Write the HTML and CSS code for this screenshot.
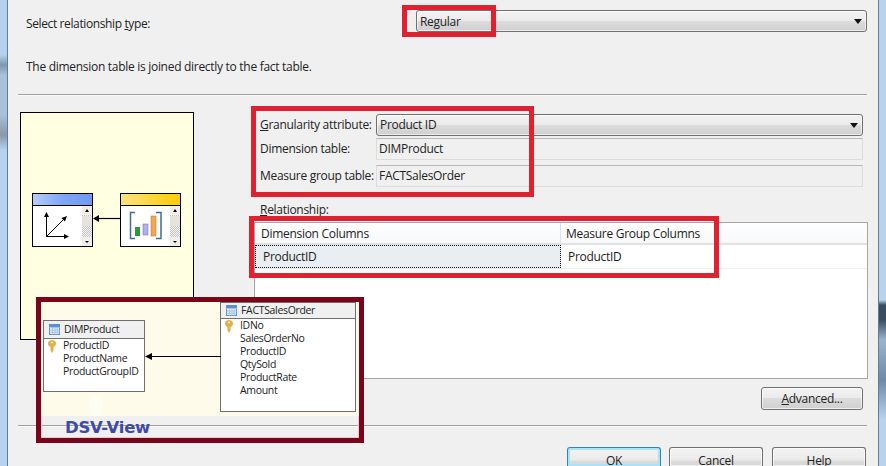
FILE: index.html
```html
<!DOCTYPE html>
<html lang="en">
<head>
<meta charset="utf-8">
<title>Define Relationship</title>
<link rel="stylesheet" href="styles.css">
</head>
<body>
<div class="screen">
  <div class="edge edge-left"></div>
  <main class="dialog">
    <div class="type-row">
      <span class="text type-label">Select relationship <u>t</u>ype:</span>
      <div class="combo combo-type"><span>Regular</span><i class="caret"></i></div>
    </div>
    <p class="desc">The dimension table is joined directly to the fact table.</p>
    <div class="rule"></div>
    <div class="main">
      <div class="preview">
        <div class="mini">
          <svg class="mini-win" width="61" height="54" viewBox="0 0 61 54">
            <defs>
              <linearGradient id="blue" x1="0" x2="1" y1="0" y2="0"><stop offset="0" stop-color="#b4cdfb"/><stop offset="0.5" stop-color="#7fa6f5"/><stop offset="1" stop-color="#6f9af2"/></linearGradient>
              <pattern id="dith" width="2" height="2" patternUnits="userSpaceOnUse"><rect width="2" height="2" fill="#f4f4f4"/><rect width="1" height="1" fill="#c4c4c4"/><rect x="1" y="1" width="1" height="1" fill="#c4c4c4"/></pattern>
            </defs>
            <rect x="0.5" y="0.5" width="60" height="53" fill="#fff" stroke="#000"/>
            <rect x="1" y="1" width="59" height="11" fill="url(#blue)"/>
            <path d="M0 12.500H61" stroke="#000"/>
            <rect x="50" y="13" width="10" height="40" fill="url(#dith)"/>
            <rect x="50" y="13" width="10" height="9" fill="#efefe8"/><rect x="50" y="23" width="10" height="10" fill="#e6e4da"/><rect x="50" y="44" width="10" height="9" fill="#efefe8"/>
            <path d="M55 16l2 3h-4z M53 48h4l-2 2z" fill="#000"/>
            <path d="M14.500 43.500V21 M14.500 43.500H36 M14.500 43.500L33 25" stroke="#000" fill="none"/>
            <path d="M14.500 19l-2.500 5h5z M37 43.500l-5-2.500v5z M35 23l-5.500 2 3.500 3.500z" fill="#000"/>
          </svg>
          <svg class="mini-arrow" width="27" height="54" viewBox="0 0 27 54">
            <path d="M5 25.500H27" stroke="#000" stroke-width="1.200"/><path d="M0 25.500l6-3.500v7z" fill="#000"/>
          </svg>
          <svg class="mini-win" width="61" height="54" viewBox="0 0 61 54">
            <defs>
              <linearGradient id="gold" x1="0" x2="1" y1="0" y2="0"><stop offset="0" stop-color="#fde37a"/><stop offset="1" stop-color="#fdcb05"/></linearGradient>
              <pattern id="dith2" width="2" height="2" patternUnits="userSpaceOnUse"><rect width="2" height="2" fill="#f4f4f4"/><rect width="1" height="1" fill="#c4c4c4"/><rect x="1" y="1" width="1" height="1" fill="#c4c4c4"/></pattern>
            </defs>
            <rect x="0.5" y="0.5" width="60" height="53" fill="#fff" stroke="#000"/>
            <rect x="1" y="1" width="59" height="11" fill="url(#gold)"/>
            <path d="M0 12.500H61" stroke="#000"/>
            <rect x="50" y="13" width="10" height="40" fill="url(#dith2)"/>
            <rect x="50" y="13" width="10" height="9" fill="#efefe8"/><rect x="50" y="23" width="10" height="10" fill="#e6e4da"/><rect x="50" y="44" width="10" height="9" fill="#efefe8"/>
            <path d="M55 16l2 3h-4z M53 48h4l-2 2z" fill="#000"/>
            <path d="M15 19.500h-4.500v26h4.500 M36 19.500h5v26h-5" fill="none" stroke="#3d6f9a" stroke-width="1.500"/>
            <rect x="15" y="34" width="5" height="9" fill="#2c9a3a"/>
            <rect x="23" y="31" width="5" height="11" fill="#b2aef0" stroke="#6a68b0" stroke-width=".5"/>
            <rect x="31" y="23" width="5" height="20" fill="#f2a94e" stroke="#b0752c" stroke-width=".5"/>
          </svg>
        </div>
      </div>
      <div class="side">
        <div class="form-row form-first">
          <label class="text form-label"><u>G</u>ranularity attribute:</label>
          <div class="combo combo-form"><span>Product ID</span><i class="caret"></i></div>
        </div>
        <div class="form-row form-second">
          <label class="text form-label">Dimension table:</label>
          <div class="readonly">DIMProduct</div>
        </div>
        <div class="form-row form-third">
          <label class="text form-label">Measure group table:</label>
          <div class="readonly">FACTSalesOrder</div>
        </div>
        <div class="text rel-label"><u>R</u>elationship:</div>
        <div class="grid">
          <div class="grid-head">
            <div class="head-cell head-a">Dimension Columns</div>
            <div class="head-cell head-b">Measure Group Columns</div>
          </div>
          <div class="grid-row">
            <div class="cell cell-a">ProductID</div>
            <div class="cell cell-b">ProductID</div>
          </div>
        </div>
        <div class="adv-row"><button class="btn btn-adv" type="button"><u>A</u>dvanced...</button></div>
      </div>
    </div>
    <div class="rule rule-bottom"></div>
    <div class="footer">
      <button class="btn btn-foot btn-ok" type="button">OK</button>
      <button class="btn btn-foot" type="button">Cancel</button>
      <button class="btn btn-foot btn-help" type="button">Help</button>
    </div>
  </main>
  <div class="edge edge-right"></div>

  <div class="mark mark-type"></div>
  <div class="mark mark-form"></div>
  <div class="mark mark-grid"></div>

  <div class="dsv">
    <div class="dsv-canvas"></div>
    <div class="dsv-smudge"></div>
    <div class="table table-dim">
      <div class="table-head">
        <svg class="tbl-icon" width="11" height="11" viewBox="0 0 11 11"><rect x=".5" y=".5" width="10" height="10" fill="#e4eefa" stroke="#5b8fd0"/><path d="M0 3.500H11M.5 6H11M.5 8.300H11M3.500 3V11M6 3V11M8.300 3V11" stroke="#9dbde6" stroke-width=".8"/><rect x="1" y="1" width="9" height="2" fill="#5b8fd0"/></svg>
        <span>DIMProduct</span>
      </div>
      <div class="table-body">
        <svg class="key" width="8" height="13" viewBox="0 0 8 13"><path d="M4 0C6.200 0 8 1.500 8 3.500S6.800 6.500 5.500 7V10.500L4 13L2.500 10.500V7C1.200 6.500 0 5.500 0 3.500S1.800 0 4 0Z" fill="#e2b04a"/><circle cx="4" cy="2.500" r="1.100" fill="#fbeec4"/></svg>
        <div>ProductID</div><div>ProductName</div><div>ProductGroupID</div>
      </div>
    </div>
    <div class="table table-fact">
      <div class="table-head">
        <svg class="tbl-icon" width="11" height="11" viewBox="0 0 11 11"><rect x=".5" y=".5" width="10" height="10" fill="#e4eefa" stroke="#5b8fd0"/><path d="M0 3.500H11M.5 6H11M.5 8.300H11M3.500 3V11M6 3V11M8.300 3V11" stroke="#9dbde6" stroke-width=".8"/><rect x="1" y="1" width="9" height="2" fill="#5b8fd0"/></svg>
        <span>FACTSalesOrder</span>
      </div>
      <div class="table-body">
        <svg class="key" width="8" height="13" viewBox="0 0 8 13"><path d="M4 0C6.200 0 8 1.500 8 3.500S6.800 6.500 5.500 7V10.500L4 13L2.500 10.500V7C1.200 6.500 0 5.500 0 3.500S1.800 0 4 0Z" fill="#e2b04a"/><circle cx="4" cy="2.500" r="1.100" fill="#fbeec4"/></svg>
        <div>IDNo</div><div>SalesOrderNo</div><div>ProductID</div><div>QtySold</div><div>ProductRate</div><div>Amount</div>
      </div>
    </div>
    <svg class="rel-arrow" width="76" height="9" viewBox="0 0 76 9"><path d="M5 4.500H76" stroke="#000" stroke-width="1.200"/><path d="M0 4.500l7-3.500v7z" fill="#000"/></svg>
    <div class="dsv-label">DSV-View</div>
  </div>
</div>
</body>
</html>
```

FILE: styles.css
```css
* { box-sizing: border-box; }
html, body { margin: 0; padding: 0; }
body { width: 886px; height: 466px; overflow: hidden; background: #f0f0f0; }
u { text-decoration: underline; text-underline-offset: 1px; }

.screen {
  position: relative;
  display: flex;
  width: 886px;
  height: 466px;
  overflow: hidden;
  font: 12px/16px "Open Sans", "Noto Sans", sans-serif;
  color: #222;
  letter-spacing: -0.29px;
}

.edge { flex: none; height: 466px; }
.edge-left {
  width: 8px;
  border-right: 1px solid #5f7c9c;
  background: linear-gradient(#b4d0ec 0 55px, #7f96ac 65px, #a8c0d8 75px, #a8c0d8 115px, #8a98a8 135px, #b6d2ee 150px);
}
.edge-right {
  width: 8px;
  border-left: 1px solid #5f7c9c;
  background: linear-gradient(#b9d3ed 0 300px, #3a4c60 305px, #3a4c60 320px, #9ab4ce 340px, #6d8aa6 380px, #b9d3ed 420px);
}

.dialog {
  flex: none;
  width: 870px;
  height: 466px;
  padding: 10px 11px 0 10px;
  background: #f0f0f0;
}

.type-row { display: flex; align-items: center; height: 22px; padding-left: 8px; justify-content: space-between; }
.type-label { padding-top: 6px; letter-spacing: -0.38px; }
.text { white-space: nowrap; }

.combo {
  position: relative;
  height: 22px;
  display: flex;
  align-items: center;
  padding-left: 3px;
  border: 1px solid #707070;
  border-radius: 3px;
  background: linear-gradient(#f3f3f3 0, #ebebeb 48%, #dcdcdc 50%, #cfcfcf 100%);
  box-shadow: inset 0 0 0 1px rgba(255,255,255,.6);
}
.combo-type { width: 451px; padding-top: 2px; }
.combo-form { width: 487px; }
.caret {
  position: absolute;
  right: 4px;
  top: 8px;
  border: 4px solid transparent;
  border-top: 5px solid #111;
  border-bottom: 0;
}

.desc { margin: 27px 0 0 8px; height: 16px; }

.rule { height: 2px; margin-top: 19px; background: linear-gradient(#a0a0a0 0 1px, #fbfbfb 1px); }

.main { display: flex; align-items: flex-start; margin-top: 16px; }

.preview {
  flex: none;
  width: 174px;
  height: 228px;
  margin-left: 2px;
  border: 1px solid #000;
  background: #ffffe1;
  padding: 80px 11px 0;
}
.mini { display: flex; }
.mini-win, .mini-arrow { display: block; flex: none; }

.side { flex: none; width: 614px; margin-left: 60px; margin-right: -1px; padding-top: 2px; }
.form-row { display: flex; align-items: center; height: 22px; padding-left: 6px; }
.form-label { width: 116px; flex: none; }
.form-second { margin-top: 2px; }
.form-third { margin-top: 5px; }
.readonly {
  width: 487px;
  height: 22px;
  padding-left: 2px;
  line-height: 20px;
  border: 1px solid #dcdcdc;
  border-top-color: #b8b8b8;
  background: #f0f0f0;
}

.rel-label { margin: 15px 0 0 6px; height: 16px; }

.grid {
  height: 157px;
  margin-top: 4px;
  border: 1px solid #a6a6a6;
  background: #fff;
}
.grid-head {
  display: flex;
  height: 22px;
  border-bottom: 2px solid #e2e2e2;
  background: linear-gradient(#fff, #f7f8fa);
}
.head-cell { line-height: 22px; }
.head-a { width: 306px; padding-left: 6px; border-right: 1px solid #dde; }
.head-b { padding-left: 5px; }
.grid-row { display: flex; height: 24px; border-bottom: 1px solid #eee; }
.cell { line-height: 23px; }
.cell-a {
  width: 306px;
  padding-left: 8px;
  background: #e9eef3;
  outline: 1px dotted #111;
  outline-offset: -1px;
}
.cell-b { padding-left: 7px; }

.adv-row { display: flex; justify-content: flex-end; margin-top: 8px; padding-right: 5px; }

.btn {
  display: block;
  font: inherit;
  letter-spacing: inherit;
  color: #222;
  padding: 0;
  border: 1px solid #707070;
  border-radius: 3px;
  background: linear-gradient(#f3f3f3 0, #ebebeb 48%, #dcdcdc 50%, #cfcfcf 100%);
  box-shadow: inset 0 0 0 1px rgba(255,255,255,.7);
}
.btn-adv { width: 102px; height: 23px; }

.rule-bottom { margin-top: 15px; }

.footer { display: flex; justify-content: flex-end; gap: 8px; margin-top: 20px; padding-right: 1px; }
.btn-foot {
  display: flex;
  justify-content: center;
  align-items: flex-start;
  width: 94px;
  height: 19px;
  padding-top: 8px;
  line-height: 10px;
  border-bottom: 0;
  border-radius: 3px 3px 0 0;
  background: linear-gradient(#f3f3f3 0, #ebebeb 12px, #dcdcdc 13px, #d4d4d4 19px);
}
.btn-help { margin-left: 1px; }
.btn-ok { border-color: #3c7fb1; box-shadow: inset 0 0 0 2px #a8e4f6; }

.mark { position: absolute; border: 5px solid #e1212f; }
.mark-type { left: 402px; top: 5px; width: 94px; height: 32px; }
.mark-form { left: 251px; top: 106px; width: 283px; height: 91px; }
.mark-grid { left: 249px; top: 216px; width: 470px; height: 62px; }

.dsv {
  position: absolute;
  left: 36px;
  top: 297px;
  width: 328px;
  height: 146px;
  border: 5px solid #7a0419;
  box-shadow: inset 0 0 0 1px #e9c9cc;
}
.dsv-canvas {
  position: absolute;
  left: 0;
  top: 0;
  right: 0;
  height: 114px;
  background: #fffbeb;
}
.dsv-smudge {
  position: absolute;
  left: 48px;
  top: 94px;
  width: 14px;
  height: 20px;
  border-radius: 7px 7px 0 0;
  background: linear-gradient(#fffef6, #fffdf2);
}
.table {
  position: absolute;
  border: 1px solid #6f6f6f;
  background: #fff;
  font-size: 10.5px;
  line-height: 13px;
  letter-spacing: -0.33px;
}
.table-dim { left: 2px; top: 18px; width: 102px; height: 72px; }
.table-fact { left: 179px; top: 0; width: 136px; height: 110px; }
.table-head {
  display: flex;
  align-items: center;
  gap: 4px;
  height: 18px;
  padding-left: 5px;
  background: #f0f0f0;
  border-bottom: 1px solid #6f6f6f;
}
.table-fact .table-head { height: 16px; }
.tbl-icon { display: block; flex: none; }
.table-body { position: relative; padding: 0 0 0 19px; }
.key { position: absolute; left: 4px; top: 1px; display: block; }
.rel-arrow { position: absolute; left: 104px; top: 50px; display: block; }

.dsv-label {
  position: absolute;
  left: 24px;
  top: 116px;
  font: bold 16.5px/20px "DejaVu Sans", sans-serif;
  letter-spacing: -0.3px;
  color: #3f4aa8;
  white-space: nowrap;
}
```
